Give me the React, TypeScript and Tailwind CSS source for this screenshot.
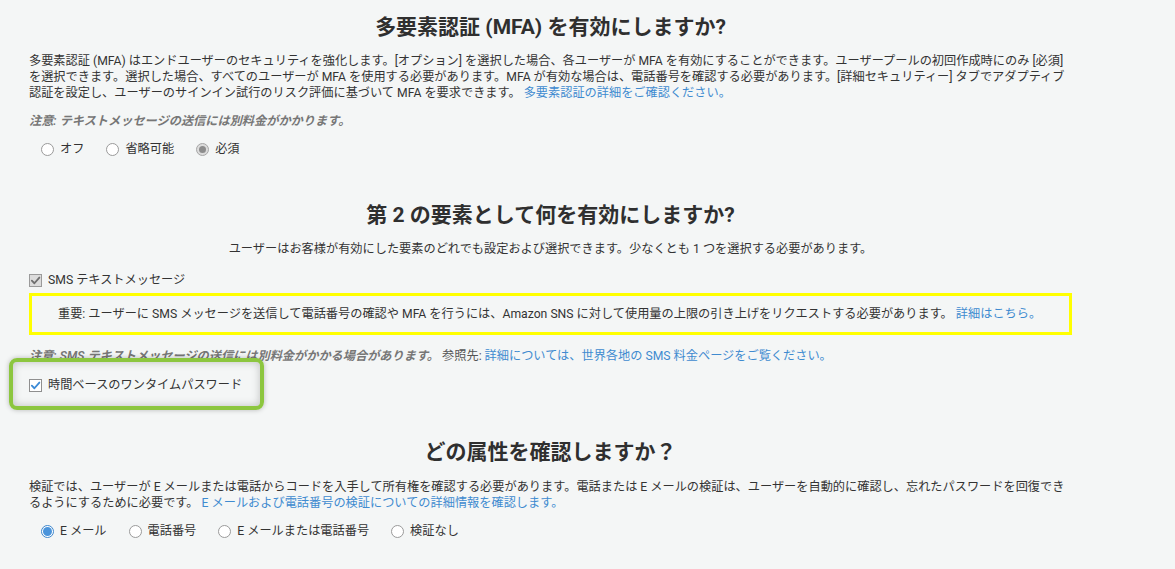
import React from "react";

const Radio = ({ state }: { state: "off" | "on" | "disabled" }) => {
  if (state === "on") {
    return (
      <span className="flex h-[13px] w-[13px] items-center justify-center rounded-full border border-[#3d86cc] bg-white">
        <span className="h-[9px] w-[9px] rounded-full bg-[#4a94db]" />
      </span>
    );
  }
  if (state === "disabled") {
    return (
      <span className="flex h-[13px] w-[13px] items-center justify-center rounded-full border border-[#a6a6a6] bg-[#dcdcdc]">
        <span className="h-[7px] w-[7px] rounded-full bg-[#8c8c8c]" />
      </span>
    );
  }
  return <span className="h-[13px] w-[13px] rounded-full border border-[#9a9a9a] bg-white" />;
};

const Checkbox = ({ disabled }: { disabled?: boolean }) => (
  <span
    className={
      disabled
        ? "flex h-[13px] w-[13px] items-center justify-center border border-[#9a9a9a] bg-[#dcdcdc]"
        : "flex h-[13px] w-[13px] items-center justify-center border border-[#8f8f8f] bg-white"
    }
  >
    <svg viewBox="0 0 12 12" className="h-[11px] w-[11px]">
      <path
        d="M2 6.2 L4.8 9 L10.2 2.8"
        fill="none"
        stroke={disabled ? "#6f6f6f" : "#3b8ad6"}
        strokeWidth="2"
        strokeLinecap="round"
        strokeLinejoin="round"
      />
    </svg>
  </span>
);

const RadioRow = ({ items }: { items: { label: string; state: "off" | "on" | "disabled" }[] }) => (
  <div className="flex h-4 items-center gap-[22px] pl-[12px]">
    {items.map((item) => (
      <label key={item.label} className="flex items-center gap-[6px]">
        <Radio state={item.state} />
        <span>{item.label}</span>
      </label>
    ))}
  </div>
);

const Link = ({ children }: { children: React.ReactNode }) => (
  <a className="text-[#3f8bd0]">{children}</a>
);

export default function App() {
  return (
    <div className="min-h-screen bg-[#f4f6f6] font-[Roboto,'Noto_Sans_CJK_JP',sans-serif] text-[12.2px] leading-4 text-[#333]">
      <div className="ml-[29px] flex w-[1043px] flex-col pt-[12px]">
        {/* MFA */}
        <h1 className="text-center text-[21px] font-bold leading-[30px] text-[#2f2f2f]">
          多要素認証 (MFA) を有効にしますか?
        </h1>
        <p className="mt-[11px] whitespace-nowrap">
          多要素認証 (MFA) はエンドユーザーのセキュリティを強化します。[オプション] を選択した場合、各ユーザーが MFA を有効にすることができます。ユーザープールの初回作成時にのみ [必須]
          <br />
          を選択できます。選択した場合、すべてのユーザーが MFA を使用する必要があります。MFA が有効な場合は、電話番号を確認する必要があります。[詳細セキュリティー] タブでアダプティブ
          <br />
          認証を設定し、ユーザーのサインイン試行のリスク評価に基づいて MFA を要求できます。 <Link>多要素認証の詳細をご確認ください。</Link>
        </p>
        <p className="mt-[12px] font-semibold italic text-[#777]">注意: テキストメッセージの送信には別料金がかかります。</p>
        <div className="mt-[12px]">
          <RadioRow
            items={[
              { label: "オフ", state: "off" },
              { label: "省略可能", state: "off" },
              { label: "必須", state: "disabled" },
            ]}
          />
        </div>

        {/* second factor */}
        <h2 className="mt-[43px] text-center text-[21px] font-bold leading-[30px] text-[#2f2f2f]">
          第 2 の要素として何を有効にしますか?
        </h2>
        <p className="mt-[11px] text-center">
          ユーザーはお客様が有効にした要素のどれでも設定および選択できます。少なくとも 1 つを選択する必要があります。
        </p>
        <label className="mt-[15px] flex h-4 items-center gap-[6px]">
          <Checkbox disabled />
          <span>SMS テキストメッセージ</span>
        </label>
        <div className="mt-[5px] flex h-[42px] items-center border-[3px] border-[#ffff00] pl-[26px]">
          <span>
            重要: ユーザーに SMS メッセージを送信して電話番号の確認や MFA を行うには、Amazon SNS に対して使用量の上限の引き上げをリクエストする必要があります。 <Link>詳細はこちら。</Link>
          </span>
        </div>
        <p className="mt-[13px]">
          <span className="font-semibold italic text-[#777]">注意: SMS テキストメッセージの送信には別料金がかかる場合があります。</span>
          <span className="text-[#555]"> 参照先: </span>
          <Link>詳細については、世界各地の SMS 料金ページをご覧ください。</Link>
        </p>
        <div className="relative mt-[13px]">
          <label className="flex h-4 items-center gap-[6px]">
            <Checkbox />
            <span>時間ベースのワンタイムパスワード</span>
          </label>
          <div className="pointer-events-none absolute left-[-20px] top-[-19px] h-[52px] w-[255px] rounded-[8px] border-[4px] border-[#8cc63f] shadow-[0_0_5px_rgba(0,0,0,0.25),inset_0_0_9px_rgba(0,0,0,0.22)]" />
        </div>

        {/* verification */}
        <h2 className="mt-[44px] text-center text-[21px] font-bold leading-[30px] text-[#2f2f2f]">
          どの属性を確認しますか？
        </h2>
        <p className="mt-[12px] whitespace-nowrap">
          検証では、ユーザーが E メールまたは電話からコードを入手して所有権を確認する必要があります。電話または E メールの検証は、ユーザーを自動的に確認し、忘れたパスワードを回復でき
          <br />
          るようにするために必要です。 <Link>E メールおよび電話番号の検証についての詳細情報を確認します。</Link>
        </p>
        <div className="mt-[12px]">
          <RadioRow
            items={[
              { label: "E メール", state: "on" },
              { label: "電話番号", state: "off" },
              { label: "E メールまたは電話番号", state: "off" },
              { label: "検証なし", state: "off" },
            ]}
          />
        </div>
      </div>
    </div>
  );
}
